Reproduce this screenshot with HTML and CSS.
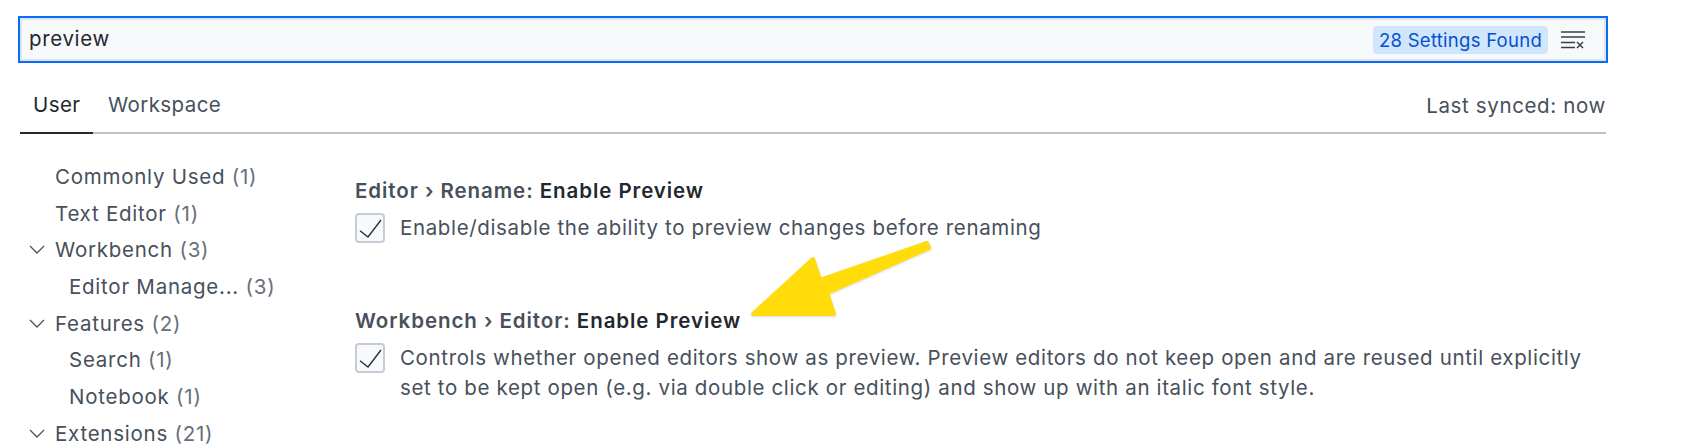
FILE: index.html
```html
<!DOCTYPE html>
<html lang="en">
<head>
<meta charset="utf-8">
<title>Settings</title>
<link rel="stylesheet" href="styles.css">
</head>
<body>
<div class="page">
  <div class="search">
    <span class="query">preview</span>
    <span class="count">28 Settings Found</span>
    <svg class="clear" width="24" height="18" viewBox="0 0 24 18" fill="none" stroke="#3b4048" stroke-width="1.5"><path d="M0 1h24M0 6h24M0 11.500h14M0 16.500h14M16 11l6 6M22 11l-6 6"/></svg>
  </div>
  <div class="tabs">
    <span class="tab active">User</span>
    <span class="tab">Workspace</span>
    <span class="synced">Last synced: now</span>
  </div>
  <div class="body">
    <nav class="tree">
      <div class="row"><span class="label">Commonly Used <span class="num">(1)</span></span></div>
      <div class="row"><span class="label">Text Editor <span class="num">(1)</span></span></div>
      <div class="row"><svg class="chev" width="16" height="9" viewBox="0 0 16 9" fill="none" stroke="#4a525c" stroke-width="1.300"><path d="M1 1l7 7 7-7"/></svg><span class="label">Workbench <span class="num">(3)</span></span></div>
      <div class="row sub"><span class="label">Editor Manage... <span class="num">(3)</span></span></div>
      <div class="row"><svg class="chev" width="16" height="9" viewBox="0 0 16 9" fill="none" stroke="#4a525c" stroke-width="1.300"><path d="M1 1l7 7 7-7"/></svg><span class="label">Features <span class="num">(2)</span></span></div>
      <div class="row sub"><span class="label">Search <span class="num">(1)</span></span></div>
      <div class="row sub"><span class="label">Notebook <span class="num">(1)</span></span></div>
      <div class="row"><svg class="chev" width="16" height="9" viewBox="0 0 16 9" fill="none" stroke="#4a525c" stroke-width="1.300"><path d="M1 1l7 7 7-7"/></svg><span class="label">Extensions <span class="num">(21)</span></span></div>
    </nav>
    <main class="settings">
      <section class="setting">
        <h3 class="title">Editor › Rename: <strong>Enable Preview</strong></h3>
        <div class="option">
          <span class="check"><svg width="24" height="24" viewBox="0 0 24 24" fill="none" stroke="#2b3036" stroke-width="1.400"><path d="M2 14.700l8 6.300L23 4"/></svg></span>
          <p class="desc">Enable/disable the ability to preview changes before renaming</p>
        </div>
      </section>
      <section class="setting">
        <h3 class="title">Workbench › Editor: <strong>Enable Preview</strong></h3>
        <div class="option">
          <span class="check"><svg width="24" height="24" viewBox="0 0 24 24" fill="none" stroke="#2b3036" stroke-width="1.400"><path d="M2 14.700l8 6.300L23 4"/></svg></span>
          <p class="desc">Controls whether opened editors show as preview. Preview editors do not keep open and are reused until explicitly<br>set to be kept open (e.g. via double click or editing) and show up with an italic font style.</p>
        </div>
      </section>
    </main>
  </div>
  <svg class="arrow" width="200" height="100" viewBox="0 0 200 100">
    <path d="M4 83L64 28L71 49L178 12L180 17L78 62L85 83Z" fill="#ffdc0a" stroke="#ffdc0a" stroke-width="4" stroke-linejoin="round"/>
  </svg>
</div>
</body>
</html>
```
FILE: styles.css
```css
html, body {
  margin: 0;
  padding: 0;
  background: #fff;
  overflow: hidden;
}

body {
  font-family: Inter, "Noto Sans", sans-serif;
  font-size: 20.500px;
  letter-spacing: 0.640px;
  color: #47505b;
}

.page {
  position: relative;
  width: 1692px;
  height: 444px;
  padding: 16px 0 0 18px;
  box-sizing: border-box;
}

.search {
  display: flex;
  align-items: center;
  box-sizing: border-box;
  width: 1590px;
  height: 47px;
  border: 2px solid #0a6cf5;
  box-shadow: inset 0 0 0 2px #dfe3ec;
  background: #f8f9fb;
  padding: 0 21px 0 9px;
}

.query {
  flex: 1;
  color: #23282e;
  padding-bottom: 2px;
}

.count {
  background: #cfe6fd;
  color: #0650cc;
  border-radius: 4px;
  padding: 0 6px;
  height: 28px;
  line-height: 28px;
  margin-right: 13px;
  font-size: 18.500px;
  letter-spacing: 0.270px;
}

.tabs {
  display: flex;
  align-items: center;
  width: 1586px;
  height: 71px;
  margin-left: 2px;
  box-sizing: border-box;
  padding-top: 13px;
  border-bottom: 2px solid #c2c2c2;
}

.tab {
  height: 56px;
  line-height: 54px;
  box-sizing: border-box;
  padding: 0 13px 0 14.500px;
  margin-bottom: -2px;
  align-self: flex-end;
  letter-spacing: 0.420px;
}

.tab.active {
  padding-left: 13px;
  color: #23282e;
  border-bottom: 2px solid #23282e;
}

.synced {
  margin-left: auto;
  padding-top: 2px;
}

.body {
  display: flex;
  padding-top: 24px;
}

.tree {
  width: 337px;
  flex: none;
  letter-spacing: 0.750px;
}

.row {
  display: flex;
  align-items: center;
  height: 36.700px;
  padding-left: 37px;
  position: relative;
}

.row.sub {
  padding-left: 51px;
}

.chev {
  position: absolute;
  left: 10.500px;
  top: 14px;
}

.num {
  color: #66707b;
}

.settings {
  flex: 1;
  padding-top: 16px;
}

.setting {
  height: 130px;
}

.title {
  margin: 0;
  font-size: 20.500px;
  letter-spacing: 0.930px;
  line-height: 33px;
  font-weight: 600;
  color: #47505b;
}

.title strong {
  font-weight: 600;
  color: #23282e;
}

.option {
  display: flex;
  align-items: flex-start;
  margin-top: 6px;
}

.check {
  flex: none;
  display: flex;
  align-items: center;
  justify-content: center;
  box-sizing: border-box;
  width: 30px;
  height: 30px;
  border: 2px solid #c6ccd6;
  border-radius: 4px;
  background: #f8f9fb;
}

.desc {
  margin: 0 0 0 15px;
  line-height: 30px;
  white-space: nowrap;
}

.arrow {
  position: absolute;
  left: 749px;
  top: 231px;
  filter: drop-shadow(0 1px 1px rgba(0, 0, 0, 0.15));
}
```
